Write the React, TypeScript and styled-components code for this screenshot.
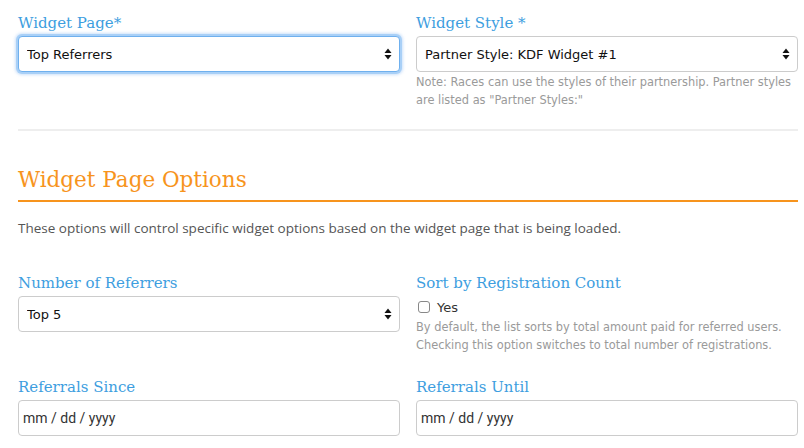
import React from "react"
import styled, { createGlobalStyle } from "styled-components"

const GlobalStyle = createGlobalStyle`
  html, body {
    margin: 0;
    padding: 0;
    background: #fff;
  }
`

const Page = styled.div`
  padding: 10px 6px 0 18px;
  width: 804px;
  box-sizing: border-box;
`

const Row = styled.div<{ $top?: number }>`
  display: grid;
  grid-template-columns: 1fr 1fr;
  column-gap: 16px;
  align-items: start;
  margin-top: ${(p) => p.$top || 0}px;
`

const Field = styled.div`
  display: flex;
  flex-direction: column;
`

const Label = styled.label`
  font-family: "DejaVu Serif", serif;
  font-size: 15px;
  line-height: 22px;
  color: #3d9ee0;
  padding-top: 2px;
  margin-bottom: 2px;
`

const SelectWrap = styled.div<{ $focused?: boolean }>`
  position: relative;
  height: 36px;
  box-sizing: border-box;
  border: 1px solid ${(p) => (p.$focused ? "#6fb0ee" : "#cccccc")};
  border-radius: 4px;
  background: #fff;
  box-shadow: ${(p) =>
    p.$focused ? "0 0 0 2px #a9d0f7, 0 0 3px 3px rgba(110,170,240,0.35)" : "none"};
`

const Select = styled.select`
  appearance: none;
  -webkit-appearance: none;
  width: 100%;
  height: 100%;
  border: none;
  background: transparent;
  outline: none;
  padding: 0 24px 0 8px;
  font-family: "DejaVu Sans", Verdana, sans-serif;
  font-size: 13px;
  color: #111;
`

const Arrows = styled.svg`
  position: absolute;
  right: 7px;
  top: 50%;
  margin-top: -6px;
  pointer-events: none;
`

const DateInput = styled.input`
  height: 36px;
  box-sizing: border-box;
  border: 1px solid #cccccc;
  border-radius: 4px;
  padding: 0 4px;
  font-family: Roboto, "Liberation Sans", sans-serif;
  font-size: 14px;
  color: #333;
  outline: none;
`

const Help = styled.p<{ $top?: number }>`
  margin: ${(p) => p.$top || 0}px 0 0;
  font-family: "DejaVu Sans", Verdana, sans-serif;
  font-size: 11.4px;
  line-height: 18px;
  color: #9a9a9a;
`

const Divider = styled.hr`
  margin: 20px 0 0;
  border: none;
  border-top: 2px solid #eeeeee;
`

const SectionTitle = styled.h2`
  margin: 34px 0 0;
  padding-bottom: 5px;
  border-bottom: 2px solid #f7941d;
  font-family: "DejaVu Serif", serif;
  font-weight: normal;
  font-size: 21.5px;
  line-height: 30px;
  color: #f7941d;
`

const Intro = styled.p`
  margin: 16px 0 0;
  font-family: "Open Sans", sans-serif;
  font-size: 13.5px;
  line-height: 20px;
  color: #555;
`

const CheckRow = styled.label`
  display: flex;
  align-items: center;
  gap: 7px;
  height: 20px;
  padding-left: 2px;
  margin-top: 1px;
  font-family: "DejaVu Sans", Verdana, sans-serif;
  font-size: 13px;
  color: #333;
`

const Box = styled.span`
  width: 10px;
  height: 10px;
  border: 1px solid #888;
  border-radius: 3px;
  background: #fff;
`

const SelectField = ({ value, focused }: { value: string; focused?: boolean }) => (
  <SelectWrap $focused={focused}>
    <Select defaultValue={value}>
      <option>{value}</option>
    </Select>
    <Arrows width="8" height="12" viewBox="0 0 8 12">
      <path d="M4 0.5 L7.5 5 L0.5 5 Z" fill="#111" />
      <path d="M4 11.5 L7.5 7 L0.5 7 Z" fill="#111" />
    </Arrows>
  </SelectWrap>
)

const App = () => {
  return (
    <Page>
      <GlobalStyle />
      <Row>
        <Field>
          <Label>Widget Page*</Label>
          <SelectField value="Top Referrers" focused />
        </Field>
        <Field>
          <Label>Widget Style *</Label>
          <SelectField value="Partner Style: KDF Widget #1" />
          <Help $top={1}>
            Note: Races can use the styles of their partnership. Partner styles
            are listed as "Partner Styles:"
          </Help>
        </Field>
      </Row>
      <Divider />
      <SectionTitle>Widget Page Options</SectionTitle>
      <Intro>
        These options will control specific widget options based on the widget
        page that is being loaded.
      </Intro>
      <Row $top={32}>
        <Field>
          <Label>Number of Referrers</Label>
          <SelectField value="Top 5" />
        </Field>
        <Field>
          <Label>Sort by Registration Count</Label>
          <CheckRow>
            <Box />
            Yes
          </CheckRow>
          <Help $top={1}>
            By default, the list sorts by total amount paid for referred users.
            Checking this option switches to total number of registrations.
          </Help>
        </Field>
      </Row>
      <Row $top={20}>
        <Field>
          <Label>Referrals Since</Label>
          <DateInput readOnly defaultValue="mm / dd / yyyy" />
        </Field>
        <Field>
          <Label>Referrals Until</Label>
          <DateInput readOnly defaultValue="mm / dd / yyyy" />
        </Field>
      </Row>
    </Page>
  )
}

export default App
